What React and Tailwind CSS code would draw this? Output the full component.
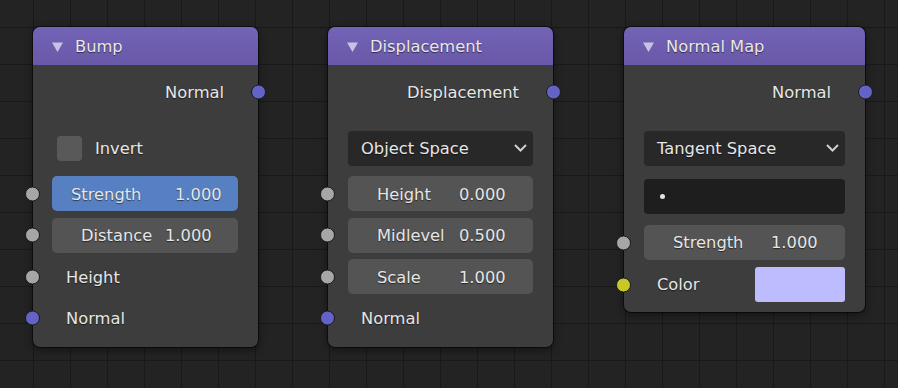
import React from 'react';

// socket dot sitting on the node edge
const Socket = ({ side, color }) => (
    <i
        className={`absolute top-1/2 -translate-y-1/2 w-[15px] h-[15px] rounded-full border border-[#1a1a1a] ${color} ${side === 'left' ? '-left-[8px]' : '-right-[8px]'}`}
    />
);

const GREY = 'bg-[#a6a6a6]';
const BLUE = 'bg-[#6363c7]';
const YELLOW = 'bg-[#c7c729]';

const Node = ({ title, pos, children }) => (
    <div className={`absolute top-[27px] rounded-[7px] bg-[#3d3d3d] shadow-[0_0_0_1px_rgba(0,0,0,0.55),0_3px_8px_rgba(0,0,0,0.45)] ${pos}`}>
        <div className="flex h-[38px] items-center rounded-t-[7px] bg-[linear-gradient(to_bottom,#7363b6,#6a58a8)] pl-[19px]">
            <svg width="11" height="10" viewBox="0 0 11 10" className="mt-[2px]">
                <polygon points="0,0.5 11,0.5 5.5,10" fill="#c9c1e4" />
            </svg>
            <span className="ml-[12px] text-[#e8e8e8]">{title}</span>
        </div>
        {children}
    </div>
);

const OutputRow = ({ label, color }) => (
    <div className="relative mt-[6px] flex h-[42px] items-center justify-end pr-[34px]">
        <span>{label}</span>
        <Socket side="right" color={color} />
    </div>
);

const InputRow = ({ label, color }) => (
    <div className="relative flex h-[41.5px] items-center pl-[33px]">
        <span>{label}</span>
        <Socket side="left" color={color} />
    </div>
);

const SliderRow = ({ label, value, inset, labelBox, active }) => (
    <div className={`relative flex h-[41.5px] items-center ${inset}`}>
        <div className={`flex h-[35px] flex-1 items-center rounded-[5px] ${active ? 'bg-[#5680c2]' : 'bg-[#545454]'}`}>
            <span className={`shrink-0 ${labelBox}`}>{label}</span>
            <span>{value}</span>
        </div>
        <Socket side="left" color={GREY} />
    </div>
);

const Dropdown = ({ label }) => (
    <div className="mt-[14px] flex h-[42px] items-center px-[20px]">
        <div className="flex h-[35px] flex-1 items-center justify-between rounded-[4px] bg-[#282828] pl-[13px] pr-[6px]">
            <span>{label}</span>
            <svg width="13" height="8" viewBox="0 0 13 8">
                <polyline points="1,1 6.5,6.5 12,1" fill="none" stroke="#cfcfcf" strokeWidth="2" />
            </svg>
        </div>
    </div>
);

export default function App() {
    return (
        <div className="relative h-[388px] w-[898px] overflow-hidden bg-[#232323] bg-[linear-gradient(to_right,#191919_1px,transparent_1px),linear-gradient(to_bottom,#191919_1px,transparent_1px)] bg-[size:37px_37px] bg-[position:33px_27px] font-['DejaVu_Sans',sans-serif] text-[16.3px] text-[#e6e6e6] [text-shadow:0_1px_1px_rgba(0,0,0,0.55)] [&_span]:pt-[2px]">
            <Node title="Bump" pos="left-[33px] w-[225px] h-[320px]">
                <OutputRow label="Normal" color={BLUE} />
                <div className="mt-[14px] flex h-[42px] items-center pl-[24px]">
                    <div className="h-[25px] w-[25px] rounded-[4px] bg-[#595959]" />
                    <span className="ml-[13px]">Invert</span>
                </div>
                <div className="mt-[4px]">
                    <SliderRow label="Strength" value="1.000" inset="pl-[19px] pr-[20px]" labelBox="w-[123px] pl-[19px]" active />
                    <SliderRow label="Distance" value="1.000" inset="pl-[19px] pr-[20px]" labelBox="w-[113px] pl-[29px]" />
                    <InputRow label="Height" color={GREY} />
                    <InputRow label="Normal" color={BLUE} />
                </div>
            </Node>

            <Node title="Displacement" pos="left-[328px] w-[225px] h-[320px]">
                <OutputRow label="Displacement" color={BLUE} />
                <Dropdown label="Object Space" />
                <div className="mt-[4px]">
                    <SliderRow label="Height" value="0.000" inset="px-[20px]" labelBox="w-[111px] pl-[29px]" />
                    <SliderRow label="Midlevel" value="0.500" inset="px-[20px]" labelBox="w-[111px] pl-[29px]" />
                    <SliderRow label="Scale" value="1.000" inset="px-[20px]" labelBox="w-[111px] pl-[29px]" />
                    <InputRow label="Normal" color={BLUE} />
                </div>
            </Node>

            <Node title="Normal Map" pos="left-[624px] w-[241px] h-[285px]">
                <OutputRow label="Normal" color={BLUE} />
                <Dropdown label="Tangent Space" />
                <div className="mx-[20px] mt-[10px] flex h-[35px] items-center rounded-[4px] bg-[#1e1e1e] pl-[16px]">
                    <i className="h-[5px] w-[5px] rounded-full bg-[#e4e4e4]" />
                </div>
                <div className="relative mt-[11px] flex h-[35px] items-center px-[20px]">
                    <div className="flex h-[35px] flex-1 items-center rounded-[5px] bg-[#545454]">
                        <span className="w-[127px] shrink-0 pl-[29px]">Strength</span>
                        <span>1.000</span>
                    </div>
                    <Socket side="left" color={GREY} />
                </div>
                <div className="relative mt-[7px] flex h-[35px] items-center pl-[33px] pr-[20px]">
                    <span className="flex-1">Color</span>
                    <div className="h-[35px] w-[90px] rounded-[3px] bg-[#bdbcff]" />
                    <Socket side="left" color={YELLOW} />
                </div>
            </Node>
        </div>
    );
}
